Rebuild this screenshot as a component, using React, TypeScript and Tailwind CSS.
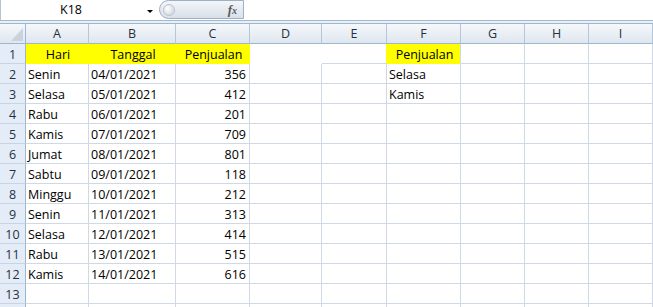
import React from "react";

const COLS = ["A", "B", "C", "D", "E", "F", "G", "H", "I"];

const DATA: [string, string, string][] = [
  ["Senin", "04/01/2021", "356"],
  ["Selasa", "05/01/2021", "412"],
  ["Rabu", "06/01/2021", "201"],
  ["Kamis", "07/01/2021", "709"],
  ["Jumat", "08/01/2021", "801"],
  ["Sabtu", "09/01/2021", "118"],
  ["Minggu", "10/01/2021", "212"],
  ["Senin", "11/01/2021", "313"],
  ["Selasa", "12/01/2021", "414"],
  ["Rabu", "13/01/2021", "515"],
  ["Kamis", "14/01/2021", "616"],
];

type CellSpec = { text?: string; cls?: string };

// Cells that carry a fill or lose gridlines, keyed by "row:col"
const SPECIAL: Record<string, string> = {
  "1:0": "bg-[#ffff00] border-[#ffff00] justify-center",
  "1:1": "bg-[#ffff00] border-[#ffff00] justify-center",
  "1:2": "bg-[#ffff00] border-[#ffff00] justify-center",
  "1:3": "border-white",
  "1:4": "border-r-[#ffff00]",
  "1:5": "bg-[#ffff00] border-b-[#ffff00] justify-center",
};

function cellsFor(row: number): CellSpec[] {
  const cells: CellSpec[] = COLS.map(() => ({}));
  if (row === 1) {
    cells[0].text = "Hari";
    cells[1].text = "Tanggal";
    cells[2].text = "Penjualan";
    cells[5].text = "Penjualan";
  } else if (row >= 2 && row <= 12) {
    const [day, date, sales] = DATA[row - 2];
    cells[0].text = day;
    cells[1].text = date;
    cells[2].text = sales;
    cells[2].cls = "justify-end pr-[3px]";
  }
  if (row === 2) cells[5].text = "Selasa";
  if (row === 3) cells[5].text = "Kamis";
  return cells;
}

function Toolbar() {
  return (
    <div className="flex h-[20px] bg-white">
      <div className="relative flex w-[159px] items-center border-l border-[#b6c3d2]">
        <span className="w-[140px] pt-[1px] text-center">K18</span>
        <span className="absolute left-[146px] top-[10px] h-0 w-0 border-x-[3px] border-t-[3px] border-x-transparent border-t-black" />
      </div>
      <div className="flex h-[19px] w-[85px] items-center justify-between rounded-l-full border border-[#9fb0c4] bg-gradient-to-b from-[#f4f6f9] to-[#d7e0ea] pl-[3px] pr-[6px]">
        <span className="h-[12px] w-[12px] rounded-full border border-[#b9c3ce] bg-[radial-gradient(circle_at_35%_35%,#ffffff,#c9d0d8)]" />
        <span className="font-['Liberation_Serif',serif] text-[13px] font-bold italic text-[#5a5a5a]">
          f<span className="text-[10px]">x</span>
        </span>
      </div>
      <div className="flex-1" />
    </div>
  );
}

export default function App() {
  const rows = Array.from({ length: 14 }, (_, i) => i + 1);
  return (
    <div className="h-[307px] w-[653px] overflow-hidden bg-white font-['Open_Sans',sans-serif] text-[12.5px] text-black">
      <Toolbar />
      <div className="h-[1px] bg-[#a3b7cf]" />
      <div className="h-[2px] bg-[#eaeff6]" />
      <div className="grid grid-cols-[26px_63px_87px_74px_72px_65px_74px_64px_64px_64px] border-t border-[#9eb6ce]">
        {/* column headers */}
        <div className="relative h-[20px] border-b border-r border-[#9eb6ce] bg-gradient-to-b from-[#f5f8fb] to-[#dfe6ef]">
          <svg className="absolute bottom-[2px] right-[2px]" width="12" height="13" viewBox="0 0 12 13">
            <polygon points="12,0 12,13 0,13" fill="#c9d3de" />
          </svg>
        </div>
        {COLS.map((c) => (
          <div
            key={c}
            className="flex h-[20px] items-center justify-center border-b border-r border-b-[#9eb6ce] border-r-[#b4c6da] bg-gradient-to-b from-[#f5f8fb] to-[#dfe6ef] pt-[1px] text-[#27313e]"
          >
            {c}
          </div>
        ))}

        {rows.map((r) => (
          <React.Fragment key={r}>
            <div className="flex h-[20px] items-end justify-center border-b border-r border-b-[#c6d4e5] border-r-[#9eb6ce] bg-[#e4ecf7] leading-[16px] text-[#27313e]">
              {/* row 14 sits below the visible edge; only its top strip shows */}
              {r <= 13 ? r : null}
            </div>
            {cellsFor(r).map((cell, ci) => (
              <div
                key={ci}
                className={`flex h-[20px] items-end overflow-hidden whitespace-nowrap border-b border-r border-[#d0d7e5] pl-[2px] leading-[16px] ${
                  SPECIAL[`${r}:${ci}`] ?? ""
                } ${cell.cls ?? ""}`}
              >
                {cell.text}
              </div>
            ))}
          </React.Fragment>
        ))}
      </div>
    </div>
  );
}
